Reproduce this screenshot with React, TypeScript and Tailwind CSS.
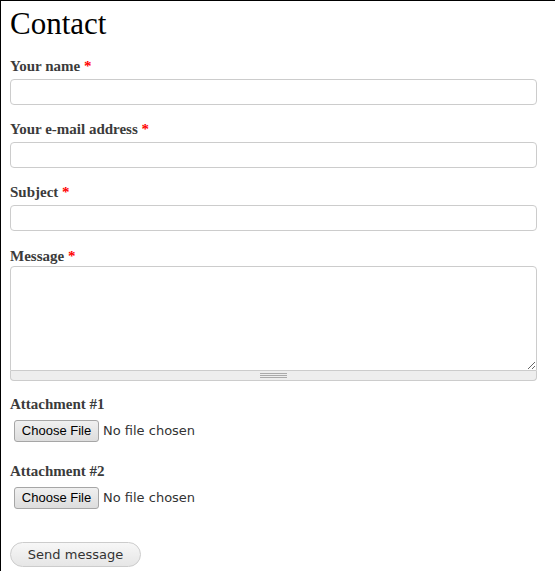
import React from "react";

const serif = { fontFamily: '"Liberation Serif", "Times New Roman", serif' };

function Label({ text, required }: { text: string; required?: boolean }) {
  return (
    <div className="h-[18px] text-[15px] leading-[18px] font-bold text-[#3b3b3b] whitespace-nowrap" style={serif}>
      {text}
      {required && <span className="text-[#ff0000]"> *</span>}
    </div>
  );
}

function TextField({ label, className }: { label: string; className?: string }) {
  return (
    <div className={className}>
      <Label text={label} required />
      <input
        type="text"
        className="mt-[4px] block h-[26px] w-full rounded-[4px] border border-[#cccccc] bg-white px-[4px] outline-none"
      />
    </div>
  );
}

function FileField({ label, className }: { label: string; className?: string }) {
  return (
    <div className={className}>
      <Label text={label} />
      <div className="mt-[7px] flex h-[22px] items-center pl-[4px]">
        <span
          className="flex h-[22px] w-[85px] items-center justify-center rounded-[3px] border border-[#a6a6a6] bg-gradient-to-b from-[#f0f0f0] to-[#dddddd] text-[13px] text-black"
          style={{ fontFamily: '"Liberation Sans", Arial, sans-serif' }}
        >
          Choose File
        </span>
        <span
          className="ml-[4px] text-[13px] text-[#333333]"
          style={{ fontFamily: '"DejaVu Sans", sans-serif' }}
        >
          No file chosen
        </span>
      </div>
    </div>
  );
}

export default function App() {
  return (
    <div className="h-[571px] border-t border-l border-black bg-white pl-[9px] pr-[18px] pt-[4px]">
      <h1 className="text-[31px] leading-[37px] font-normal text-black" style={serif}>
        Contact
      </h1>
      <form className="mt-[15px]" onSubmit={(e) => e.preventDefault()}>
        <TextField label="Your name" className="mb-[15px]" />
        <TextField label="Your e-mail address" className="mb-[15px]" />
        <TextField label="Subject" className="mb-[16px]" />
        <div>
          <Label text="Message" required />
          <textarea className="mt-[1px] block h-[105px] w-full rounded-t-[4px] border border-[#cccccc] bg-white outline-none" />
          <div className="flex h-[10px] w-full items-center justify-center rounded-b-[4px] border-x border-b border-[#cccccc] bg-[#eeeeee]">
            <div className="flex w-[27px] flex-col gap-[1px]">
              <div className="h-px bg-[#aaaaaa]" />
              <div className="h-px bg-[#aaaaaa]" />
              <div className="h-px bg-[#aaaaaa]" />
            </div>
          </div>
        </div>
        <FileField label="Attachment #1" className="mt-[14px]" />
        <FileField label="Attachment #2" className="mt-[20px]" />
        <button
          type="submit"
          className="mt-[33px] flex h-[25px] w-[131px] items-center justify-center rounded-full border border-[#cccccc] bg-gradient-to-b from-[#f7f7f7] to-[#e6e6e6] text-[13px] text-[#333333]"
          style={{ fontFamily: '"DejaVu Sans", sans-serif' }}
        >
          Send message
        </button>
      </form>
    </div>
  );
}
